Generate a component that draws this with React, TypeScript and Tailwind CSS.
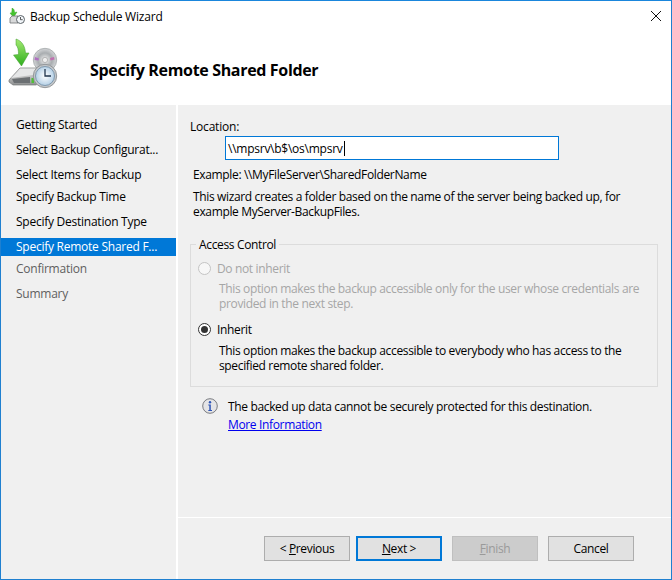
import React from "react";

const font = { fontFamily: '"Open Sans", "Noto Sans", sans-serif' };

function BigIcon() {
  return (
    <svg width="56" height="56" viewBox="0 0 56 56" className="block">
      <defs>
        <linearGradient id="ar" x1="0" y1="0" x2="0" y2="1"><stop offset="0" stopColor="#a4ea72" /><stop offset="1" stopColor="#2fae1e" /></linearGradient>
        <linearGradient id="dr" x1="0" y1="0" x2="0" y2="1"><stop offset="0" stopColor="#f2f2f2" /><stop offset="1" stopColor="#8d8f90" /></linearGradient>
        <radialGradient id="cd"><stop offset="0" stopColor="#f4f4f4" /><stop offset=".6" stopColor="#a9adb0" /><stop offset="1" stopColor="#d4d6d8" /></radialGradient>
        <radialGradient id="cl"><stop offset="0" stopColor="#ffffff" /><stop offset="1" stopColor="#b5d0e6" /></radialGradient>
      </defs>
      <circle cx="37" cy="22" r="11.700" fill="url(#cd)" stroke="#8f9396" strokeWidth=".6" />
      <path d="M27 19l4 1.500-.5 2-4-.5z" fill="#b070c0" />
      <path d="M42 20l4-1 .5 2.500-4 1z" fill="#c070b0" />
      <circle cx="37" cy="22" r="2.600" fill="#eee" stroke="#888" strokeWidth=".5" />
      <path d="M1 42L12 30h18l3 6v8l-5 3H5l-4-3z" fill="url(#dr)" stroke="#77797a" strokeWidth=".7" />
      <path d="M3 40l10-9h16l2 5z" fill="#e6e7e8" />
      <path d="M4 41l18-2v6H6z" fill="#6c7073" />
      <rect x="23.500" y="40" width="2.500" height="5" fill="#4fbf36" />
      <path d="M8 1C14 3 17 8 17.500 15L21 15 13.500 28 5.500 17 10.500 16.500C10.500 12 10 9 8 7z" fill="url(#ar)" stroke="#3d9b2a" strokeWidth=".5" />
      <circle cx="37" cy="38" r="11.700" fill="#c4c7ca" stroke="#85898c" strokeWidth=".8" />
      <circle cx="37" cy="38" r="9.500" fill="url(#cl)" stroke="#6f8ba3" strokeWidth=".8" />
      <path d="M37 31v7h6" fill="none" stroke="#22364e" strokeWidth="1.300" />
    </svg>
  );
}

function SmallIcon() {
  return (
    <svg width="16" height="16" viewBox="0 0 16 16" className="-mt-[1px] block">
      <path d="M3 0c2 1 2.500 2 2.500 4.500L8 4 4.500 9.500 1 5l1.700-.3C3 3 3 1.500 3 0z" fill="#45c52f" stroke="#2f9a22" strokeWidth=".4" />
      <path d="M1 10l2-2h6v7H1z" fill="#d8d9da" stroke="#6f7173" strokeWidth=".8" />
      <circle cx="11.500" cy="11.500" r="4" fill="#f2f6fa" stroke="#5c6368" />
      <path d="M11.500 9v2.700h2.200" fill="none" stroke="#333" strokeWidth=".8" />
    </svg>
  );
}

function InfoIcon() {
  return (
    <svg width="16" height="16" viewBox="0 0 16 16" className="block">
      <circle cx="8" cy="8" r="7.300" fill="#e4e4e6" stroke="#7a7c80" />
      <circle cx="8" cy="4.300" r="1.200" fill="#2d55b8" />
      <path d="M6.300 6.500h2.500v5.500h1.200v1H6.300v-1h1V7.500h-1z" fill="#2d55b8" />
    </svg>
  );
}

function Radio({ checked, disabled }: { checked?: boolean; disabled?: boolean }) {
  return (
    <span className={`flex h-[13px] w-[13px] shrink-0 items-center justify-center rounded-full border ${disabled ? "border-[#c4c4c4] bg-[#f7f7f7]" : "border-[#333333] bg-white"}`}>
      {checked && <span className="h-[7px] w-[7px] rounded-full bg-[#333333]" />}
    </span>
  );
}

const navItems = [
  { label: "Getting Started", cls: "h-[18px] mt-[11px] text-black" },
  { label: "Select Backup Configurat...", cls: "h-[18px] mt-[7px] text-black" },
  { label: "Select Items for Backup", cls: "h-[18px] mt-[7px] text-black" },
  { label: "Specify Backup Time", cls: "h-[18px] mt-[4px] text-black" },
  { label: "Specify Destination Type", cls: "h-[18px] mt-[7px] text-black" },
  { label: "Specify Remote Shared F...", cls: "h-[18px] mt-[7px] bg-[#0078d7] text-white" },
  { label: "Confirmation", cls: "h-[18px] mt-[4px] text-[#5f5f5f]" },
  { label: "Summary", cls: "h-[18px] mt-[7px] text-[#5f5f5f]" },
];

function Btn({ children, cls }: { children: React.ReactNode; cls: string }) {
  return (
    <div className={`flex h-[25px] w-[86px] items-center justify-center ${cls}`}>{children}</div>
  );
}

export default function App() {
  return (
    <div className="flex h-[580px] w-[672px] flex-col overflow-hidden border-x border-b border-t border-x-[#1f80d0] border-b-[#1f80d0] border-t-[#1a86dc] bg-white text-[12px] leading-[15px] text-black" style={font}>
      <div className="flex h-[31px] shrink-0 items-center pl-[8px] pr-[10px]">
        <SmallIcon />
        <span className="ml-[5px] tracking-[-0.2px]">Backup Schedule Wizard</span>
        <svg width="10" height="10" viewBox="0 0 10 10" className="-mt-[2px] ml-auto">
          <path d="M0 0l10 10M10 0L0 10" stroke="#111" strokeWidth="1" fill="none" />
        </svg>
      </div>
      <div className="flex h-[73px] shrink-0 items-start pl-[7px] pt-[6px]">
        <BigIcon />
        <h1 className="ml-[26px] mt-[25px] text-[16px] font-bold tracking-[-0.33px]">Specify Remote Shared Folder</h1>
      </div>
      <div className="flex min-h-0 flex-1">
        <nav className="w-[175px] shrink-0 bg-[#f0f0f0] tracking-[-0.25px]">
          {navItems.map((n) => (
            <div key={n.label} className={`flex items-center whitespace-nowrap pb-[2px] pl-[15px] ${n.cls}`}>{n.label}</div>
          ))}
        </nav>
        <main className="ml-[2px] flex min-w-0 flex-1 flex-col bg-[#f0f0f0] tracking-[-0.35px]">
          <div className="min-h-0 flex-1 pl-[12px] pr-[13px] pt-[14px]">
            <div className="tracking-[-0.2px]">Location:</div>
            <div className="ml-[35px] mt-[2px] flex h-[24px] w-[334px] items-center border border-[#0078d7] bg-white pl-[2px] tracking-[-0.25px]">\\mpsrv\b$\os\mpsrv<span className="ml-px h-[15px] w-px bg-black" /></div>
            <div className="ml-[3px] mt-[7px]">Example: \\MyFileServer\SharedFolderName</div>
            <p className="ml-[3px] mt-[7px] w-[450px]">This wizard creates a folder based on the name of the server being backed up, for example MyServer-BackupFiles.</p>
            <fieldset className="mt-[18px] h-[150px] border border-[#dcdcdc] pl-[14px] pr-[10px]">
              <legend className="-ml-[9px] px-[3px]">Access Control</legend>
              <div className="-ml-[7px] mt-[9px] flex items-center gap-[6px] text-[#a6a6a6]"><Radio disabled />Do not inherit</div>
              <p className="mt-[5px] pl-[14px] text-[#a6a6a6]">This option makes the backup accessible only for the user whose credentials are provided in the next step.</p>
              <div className="-ml-[7px] mt-[11px] flex items-center gap-[6px]"><Radio checked />Inherit</div>
              <p className="mt-[6px] pl-[14px]">This option makes the backup accessible to everybody who has access to the specified remote shared folder.</p>
            </fieldset>
            <div className="ml-[12px] mt-[11px] flex items-start gap-[10px]">
              <InfoIcon />
              <div>
                <div className="mt-[1px]">The backed up data cannot be securely protected for this destination.</div>
                <a className="mt-[3px] block text-[#0000ee] underline">More Information</a>
              </div>
            </div>
          </div>
          <footer className="flex h-[62px] shrink-0 items-start border-t border-white pl-[86px] pt-[18px]">
            <Btn cls="border border-[#adadad] bg-[#e1e1e1]"><span>&lt; <u>P</u>revious</span></Btn>
            <Btn cls="ml-[6px] border-2 border-[#0078d7] bg-[#e1e1e1]"><span><u>N</u>ext &gt;</span></Btn>
            <Btn cls="ml-[10px] border border-[#bfbfbf] bg-[#cccccc] text-[#9a9a9a]"><span><u>F</u>inish</span></Btn>
            <Btn cls="ml-[10px] border border-[#adadad] bg-[#e1e1e1]"><span>Cancel</span></Btn>
          </footer>
        </main>
      </div>
    </div>
  );
}
